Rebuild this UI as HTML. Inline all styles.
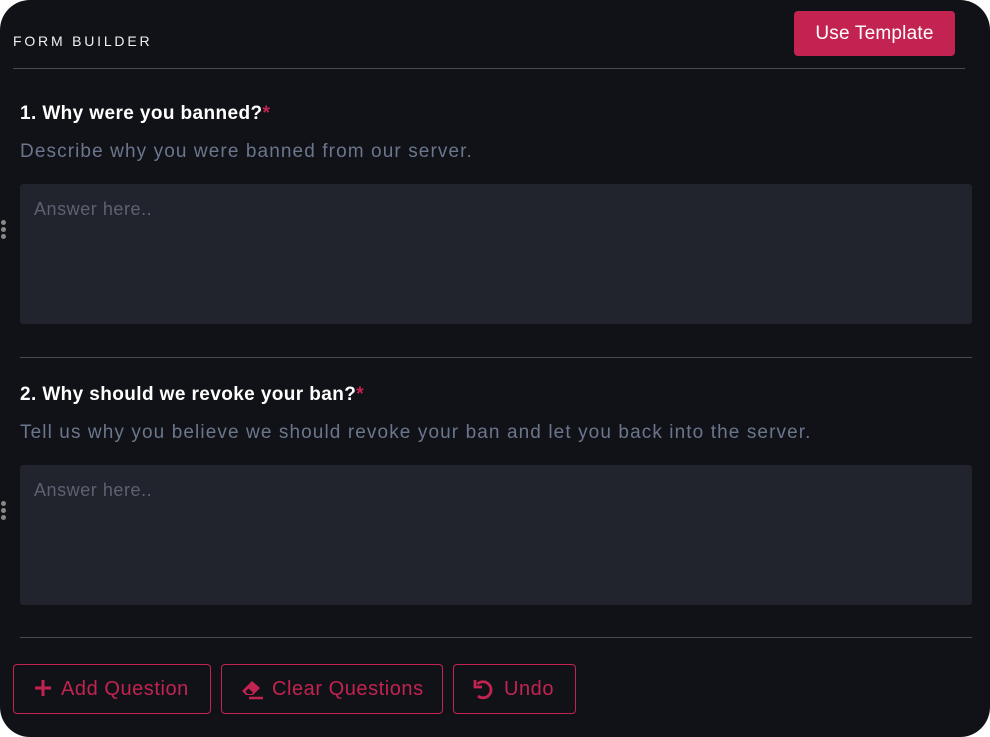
<!DOCTYPE html>
<html><head><style>
html,body{margin:0;padding:0;background:#fff;width:990px;height:737px;overflow:hidden}
.card{position:absolute;left:0;top:0;width:990px;height:737px;background:#111217;border-radius:30px;font-family:"Liberation Sans",sans-serif}
.title{position:absolute;left:13px;top:33px;color:#f0f0f0;font-size:14px;letter-spacing:2.8px}
.tpl{position:absolute;left:794px;top:11px;width:161px;height:45px;background:#c22350;border-radius:4px;color:#fff;font-size:19px;line-height:45px;text-align:center;letter-spacing:0.2px}
.hr{position:absolute;height:1px;background:#4a4b50}
.q{position:absolute;left:20px;color:#fff;font-size:19px;font-weight:bold;letter-spacing:0.4px}
.q span{color:#c22350}
.d{position:absolute;left:20px;color:#6b768c;font-size:19px;letter-spacing:1.1px}
.ta{position:absolute;left:20px;width:952px;height:140px;background:#21232d;border-radius:3px}
.ta div{position:absolute;left:14px;top:15px;color:#5e6270;font-size:18px;letter-spacing:0.55px}
.grip{position:absolute;left:1px;width:6px}
.grip i{display:block;width:5px;height:5px;border-radius:50%;background:#888;margin-bottom:2px}
.btn{position:absolute;top:664px;height:50px;border:1px solid #c22350;border-radius:4px;color:#c22350;font-size:20px;line-height:48px;box-sizing:border-box;letter-spacing:0.55px}
.btn svg{position:absolute;top:14px}
</style></head><body>
<div class="card">
<div class="title">FORM BUILDER</div>
<div class="tpl">Use Template</div>
<div class="hr" style="left:13px;width:952px;top:68px"></div>

<div class="q" style="top:103px">1. Why were you banned?<span>*</span></div>
<div class="d" style="top:141px">Describe why you were banned from our server.</div>
<div class="grip" style="top:220px"><i></i><i></i><i></i></div>
<div class="ta" style="top:184px"><div>Answer here..</div></div>
<div class="hr" style="left:20px;width:952px;top:357px"></div>

<div class="q" style="top:384px">2. Why should we revoke your ban?<span>*</span></div>
<div class="d" style="top:422px">Tell us why you believe we should revoke your ban and let you back into the server.</div>
<div class="grip" style="top:501px"><i></i><i></i><i></i></div>
<div class="ta" style="top:465px"><div>Answer here..</div></div>
<div class="hr" style="left:20px;width:952px;top:637px"></div>

<div class="btn" style="left:13px;width:198px"><svg style="left:20px" width="18" height="18" viewBox="0 0 18 18"><path d="M9 1v16M1 9h16" stroke="#c22350" stroke-width="3"/></svg><span style="position:absolute;left:47px">Add Question</span></div>
<div class="btn" style="left:221px;width:222px"><svg style="left:19px" width="24" height="22" viewBox="0 0 24 22"><path d="M1 12 L11 2 L19 9 L12 16 H5 Z" fill="#c22350"/><path d="M4.5 12.5 L7.5 9.5 L12 13.5 L10.5 15 H6.5 Z" fill="#111217"/><path d="M8 19H22" stroke="#c22350" stroke-width="2.5"/></svg><span style="position:absolute;left:50px">Clear Questions</span></div>
<div class="btn" style="left:453px;width:123px"><svg style="left:18px" width="24" height="22" viewBox="0 0 24 22"><path d="M5.5 5 A8 8 0 1 1 6 17" fill="none" stroke="#c22350" stroke-width="2.8"/><path d="M3 1V8H10" fill="none" stroke="#c22350" stroke-width="2.8"/></svg><span style="position:absolute;left:50px">Undo</span></div>
</div>
</body></html>
